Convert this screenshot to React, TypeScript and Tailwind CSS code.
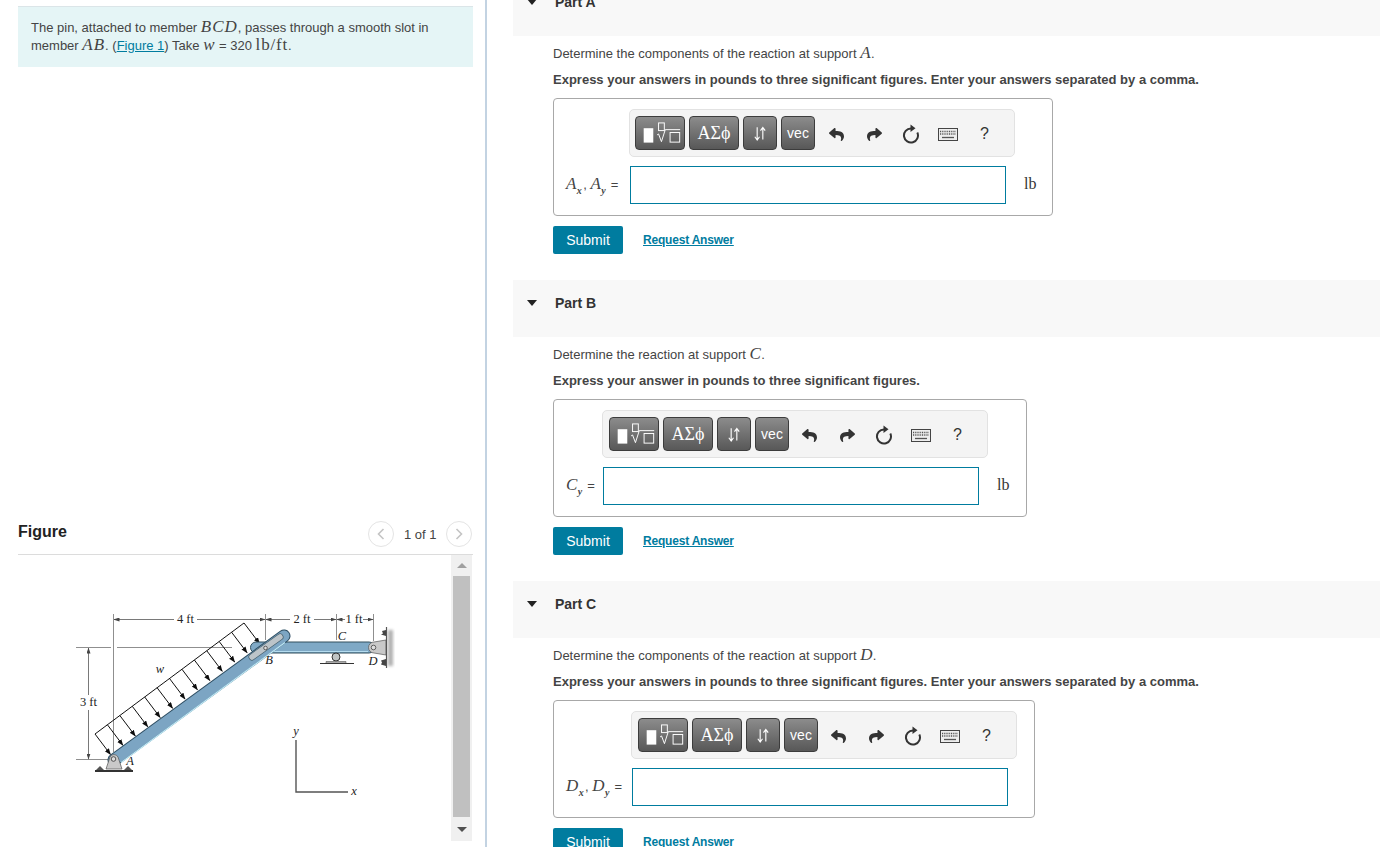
import { ReactNode } from 'react';
import { FaReply, FaShare } from 'react-icons/fa';

const Mi = ({ children, wide }: { children: ReactNode; wide?: boolean }) => (
  <span className={`[font-family:'Liberation_Serif',serif] italic text-[17px] ${wide ? 'tracking-[1px]' : 'tracking-[0.4px]'}`}>{children}</span>
);

const Sub = ({ children }: { children: ReactNode }) => (
  <sub className="text-[10px] font-bold align-[-2px] leading-none mr-[1px]">{children}</sub>
);

function TemplateIcon() {
  return (
    <svg width="50" height="34" viewBox="0 0 50 34" fill="none" stroke="#fff" strokeWidth="1">
      <rect x="8" y="12" width="10" height="15" fill="#fff" stroke="none" />
      <rect x="23.500" y="6.500" width="6" height="8" />
      <path d="M22 19l1.500-1 3 8 4-12.500h15.500" />
      <rect x="35.500" y="16.500" width="10" height="10" />
    </svg>
  );
}

function ArrowsIcon() {
  return (
    <svg width="34" height="34" viewBox="0 0 34 34" fill="none" stroke="#fff" strokeWidth="1.200">
      <path d="M14 11v13M11.500 21l2.500 3.500 2.500-3.500M20 24V11M17.500 14.500l2.500-3.500 2.500 3.500" />
    </svg>
  );
}

function ResetIcon() {
  return (
    <svg width="18" height="20" viewBox="0 0 18 20" fill="none">
      <path d="M9 4.500a7 7 0 1 0 6.300 4" stroke="#333" strokeWidth="2" />
      <path d="M8.500 0.500l5 3.800-5 3.700z" fill="#333" />
    </svg>
  );
}

function KeyboardIcon() {
  return (
    <svg width="20" height="13" viewBox="0 0 20 13" fill="none">
      <rect x="0.500" y="0.500" width="19" height="12" fill="#eee" stroke="#444" />
      <path d="M2 3.500h16M2 6h16" stroke="#555" strokeWidth="1.300" strokeDasharray="1 0.800" />
      <path d="M4 9.500h12" stroke="#555" strokeWidth="1.300" />
    </svg>
  );
}

function ToolButton({ className, children }: { className: string; children: ReactNode }) {
  return (
    <div className={`h-[34px] flex items-center justify-center rounded-[4px] border border-[#3c3c3c] bg-gradient-to-b from-[#8c8c8c] to-[#585858] text-white ${className}`}>
      {children}
    </div>
  );
}

function Toolbar({ nudge }: { nudge?: boolean }) {
  return (
    <div className="w-[386px] h-[48px] flex items-center pl-[5px] rounded-[5px] border border-[#e2e2e2] bg-[#f4f4f4]">
      <div className={nudge ? 'flex gap-[4px] ml-px -mr-px' : 'flex gap-[4px]'}>
        <ToolButton className="w-[50px]"><TemplateIcon /></ToolButton>
        <ToolButton className="w-[50px] [font-family:'Liberation_Serif',serif] text-[18px]">ΑΣϕ</ToolButton>
        <ToolButton className="w-[34px]"><ArrowsIcon /></ToolButton>
        <ToolButton className="w-[34px] text-[14px]">vec</ToolButton>
      </div>
      <div className="flex items-center text-[#333] ml-[3px] mt-[2px]">
        <div className="w-[37px] flex justify-center"><FaReply size={15} /></div>
        <div className="w-[38px] flex justify-center"><FaShare size={15} /></div>
        <div className="w-[36px] flex justify-center"><ResetIcon /></div>
        <div className="w-[37px] flex justify-center"><KeyboardIcon /></div>
        <div className="w-[37px] flex justify-center text-[16px]">?</div>
      </div>
    </div>
  );
}

type PartProps = {
  name: string;
  question: ReactNode;
  instruction: string;
  label: ReactNode;
  labelWidth: string;
  boxWidth: string;
  unit?: string;
  nudge?: boolean;
};

function Part({ name, question, instruction, label, labelWidth, boxWidth, unit, nudge }: PartProps) {
  return (
    <section className="pb-[26px]">
      <div className="h-[57px] bg-[#f8f8f8] flex items-center pl-[14px] pb-[11px]">
        <div className="w-0 h-0 border-l-[5.5px] border-r-[5.5px] border-t-[6px] border-l-transparent border-r-transparent border-t-[#222]" />
        <h3 className="ml-[18px] font-bold text-[14px] text-[#333]">{name}</h3>
      </div>
      <div className="pl-[40px]">
        <p className="mt-[7px] h-5 leading-5 text-[13px] text-[#444] whitespace-nowrap">{question}</p>
        <p className="mt-[7px] h-5 leading-5 text-[13px] font-bold text-[#444] whitespace-nowrap">{instruction}</p>
        <div className={`mt-[8px] h-[118px] rounded-[4px] border border-[#a8a8a8] pt-[10px] ${boxWidth}`}>
          <div className={`flex ${labelWidth}`}>
            <div className="shrink-0 w-full" />
            <div className="shrink-0 -ml-px"><Toolbar nudge={nudge} /></div>
          </div>
          <div className="flex items-center mt-[9px]">
            <div className={`shrink-0 pl-[12px] pb-[2px] text-[#444] text-[13px] whitespace-nowrap ${labelWidth}`}>{label}</div>
            <div className="shrink-0 w-[376px] h-[38px] border border-[#007c9f] bg-white" />
            {unit && <span className="ml-[18px] pb-[2px] [font-family:'Liberation_Serif',serif] text-[16px] text-[#333]">{unit}</span>}
          </div>
        </div>
        <div className="mt-[10px] flex items-center">
          <button className="w-[70px] h-[28px] rounded-[2px] bg-[#007c9f] text-white text-[14px]">Submit</button>
          <a className="ml-[20px] text-[12px] font-bold tracking-[-0.2px] text-[#007c9f] underline">Request Answer</a>
        </div>
      </div>
    </section>
  );
}

function Diagram() {
  const arrows = Array.from({ length: 13 }, (_, i) => ({
    x: 95 + 12.42 * i,
    y: 734 - 9.25 * i,
  }));
  return (
    <svg width="433" height="292" viewBox="18 555 433 292" className="block" fill="none">
      <defs>
        <marker id="head" markerWidth="7" markerHeight="6" refX="6" refY="2.500" orient="auto" markerUnits="userSpaceOnUse">
          <path d="M0 0l6.500 2.500L0 5z" fill="#111" />
        </marker>
        <marker id="dim" markerWidth="6" markerHeight="4" refX="5.500" refY="2" orient="auto" markerUnits="userSpaceOnUse">
          <path d="M0 0l6 2-6 2z" fill="#444" />
        </marker>
        <marker id="dimStart" markerWidth="6" markerHeight="4" refX="0.500" refY="2" orient="auto" markerUnits="userSpaceOnUse">
          <path d="M6 0L0 2l6 2z" fill="#444" />
        </marker>
        <filter id="soft"><feGaussianBlur stdDeviation="0.400" /></filter>
        <filter id="shadow" x="-30%" y="-300%" width="160%" height="700%"><feGaussianBlur stdDeviation="1.500" /></filter>
      </defs>

      <g filter="url(#soft)">
        {/* dimension and reference lines */}
        <g stroke="#8f8f8f" strokeWidth="1">
          <path d="M113.500 614V752M265.500 614V640M336.500 614V640M373.500 614V641" />
          <path d="M76 647.500H111M117 647.500H232M76 759.500H108" />
        </g>
        <g stroke="#555" strokeWidth="0.800">
          <path d="M114 619.500H174" markerStart="url(#dimStart)" />
          <path d="M197 619.500H265" markerEnd="url(#dim)" />
          <path d="M266 619.500H290" markerStart="url(#dimStart)" />
          <path d="M314 619.500H336" markerEnd="url(#dim)" />
          <path d="M337 619.500H345" markerStart="url(#dimStart)" />
          <path d="M363 619.500H373" markerEnd="url(#dim)" />
          <path d="M88.500 648V695" markerStart="url(#dimStart)" />
          <path d="M88.500 710V759" markerEnd="url(#dim)" />
        </g>

        {/* distributed load */}
        <path d="M95 734L244 623" stroke="#111" strokeWidth="1" />
        {arrows.map((a, i) => (
          <path key={i} d={`M${a.x} ${a.y}l15.500 20.500`} stroke="#111" strokeWidth="1" markerEnd="url(#head)" />
        ))}

        {/* member BCD */}
        <rect x="250.500" y="642" width="124" height="11" rx="5.500" fill="#7fa9c6" stroke="#33505f" strokeWidth="1" />
        <path d="M262 651.500H368" stroke="#b5dcef" strokeWidth="1" />

        {/* support D */}
        <path d="M388 630h5v36h-5z" fill="#b0b0b0" filter="url(#shadow)" />
        <path d="M386 640L374 642a5.500 5.500 0 0 0 0 11L386 655z" fill="#c9c9c9" stroke="#555" strokeWidth="0.700" />
        <circle cx="373.500" cy="647.500" r="2.300" fill="#ddd" stroke="#444" strokeWidth="0.800" />
        <path d="M386.500 627V668" stroke="#555" strokeWidth="1.200" />
        <path d="M386 636l-5-1.500 2-1-1-2.500 4-1zM386 666l-5-1.500 1-2-1-2 5-1.500z" fill="#444" />

        {/* member AB */}
        <path d="M114 760L284 636" stroke="#2f4e62" strokeWidth="13" strokeLinecap="round" />
        <path d="M114 760L284 636" stroke="#7ba5c3" strokeWidth="11" strokeLinecap="round" />
        <path d="M121 762.500L285 642.500" stroke="#c2ecf9" strokeWidth="1.200" />
        <path d="M252 657L280 637" stroke="#47616f" strokeWidth="7" strokeLinecap="round" />
        <path d="M252 657L280 637" stroke="#bcc4c9" strokeWidth="5.500" strokeLinecap="round" />
        <circle cx="265.500" cy="648" r="1.800" fill="#ddd" stroke="#444" strokeWidth="0.800" />

        {/* roller C */}
        <path d="M322 667h32" stroke="#aaa" strokeWidth="3" filter="url(#shadow)" />
        <circle cx="336" cy="657" r="4" fill="#bfc4c4" stroke="#333" strokeWidth="1" />
        <path d="M326 661.500H346V663.500H326z" fill="#aaa" stroke="#444" strokeWidth="0.500" />
        <path d="M320 663.500H354" stroke="#333" strokeWidth="1" />

        {/* support A */}
        <path d="M97 775h36" stroke="#999" strokeWidth="4" filter="url(#shadow)" />
        <path d="M106 769L110 757a4.500 4.500 0 0 1 8 0L122 769z" fill="#c9c9c9" stroke="#555" strokeWidth="0.700" />
        <circle cx="113.500" cy="759" r="2.300" fill="#ddd" stroke="#333" strokeWidth="0.800" />
        <path d="M96 770l4-4 4 4zM124 770l4-4 4 4z" fill="#555" />
        <path d="M95 771H133" stroke="#333" strokeWidth="2" />

        {/* axes */}
        <path d="M296 740V792H348" stroke="#555" strokeWidth="1.400" />
      </g>

      <g fontFamily="'Liberation Serif', serif" fontSize="12.500" fill="#222">
        <text x="185.500" y="623" textAnchor="middle">4 ft</text>
        <text x="302" y="623" textAnchor="middle">2 ft</text>
        <text x="354" y="623" textAnchor="middle">1 ft</text>
        <text x="88.500" y="706" textAnchor="middle">3 ft</text>
        <g fontStyle="italic">
          <text x="160" y="673" textAnchor="middle">w</text>
          <text x="269" y="664" textAnchor="middle">B</text>
          <text x="342" y="640" textAnchor="middle">C</text>
          <text x="373" y="665" textAnchor="middle">D</text>
          <text x="130" y="765" textAnchor="middle">A</text>
          <text x="296" y="735" textAnchor="middle">y</text>
          <text x="354" y="795" textAnchor="middle">x</text>
        </g>
      </g>
    </svg>
  );
}

function PagerButton({ dir }: { dir: 'left' | 'right' }) {
  return (
    <div className="w-[26px] h-[26px] rounded-full border border-[#e4e4e4] flex items-center justify-center">
      <svg width="10" height="14" viewBox="0 0 10 14" fill="none" stroke="#c4c4c4" strokeWidth="1.600">
        <path d={dir === 'left' ? 'M7.500 2L2.500 7l5 5' : 'M2.500 2l5 5-5 5'} />
      </svg>
    </div>
  );
}

function ScrollBar() {
  return (
    <div className="w-[21px] h-[286px] bg-[#f0f0f0] px-[2px] flex flex-col items-center">
      <div className="h-[21px] flex items-center justify-center">
        <div className="w-0 h-0 border-l-[5px] border-r-[5px] border-b-[5px] border-l-transparent border-r-transparent border-b-[#a0a0a0]" />
      </div>
      <div className="w-[17px] h-[241px] bg-[#c0c0c0]" />
      <div className="h-[24px] flex items-center justify-center">
        <div className="w-0 h-0 border-l-[5px] border-r-[5px] border-t-[5px] border-l-transparent border-r-transparent border-t-[#505050]" />
      </div>
    </div>
  );
}

export default function App() {
  return (
    <div className="flex w-[1380px] h-[847px] overflow-hidden bg-white [font-family:'Liberation_Sans',Arial,sans-serif]">
      <aside className="w-[487px] shrink-0 border-r-2 border-[#c3d3e2] pl-[18px] pr-[12px] pt-[6px]">
        <div className="h-[61px] border-t border-[#dbe5e8] bg-[#e5f5f6] pl-[13px] pt-[11px] text-[13px] leading-[17px] text-[#444] whitespace-nowrap">
          <p>
            The pin, attached to member <Mi wide>BCD</Mi>, passes through a smooth slot in
            <br />
            member <Mi wide>AB</Mi>. (<a className="text-[#007c9f] underline">Figure 1</a>) Take <Mi wide>w</Mi> = 320{' '}
            <span className="[font-family:'Liberation_Serif',serif] text-[17px] tracking-[0.8px]">lb/ft</span>.
          </p>
        </div>
        <div className="mt-[450px] h-[38px] flex items-center justify-between border-b border-[#dcdcdc] pb-[8px] pr-px">
          <h2 className="font-bold text-[16px] text-[#222]">Figure</h2>
          <div className="flex items-center mt-[4px] text-[13px] text-[#444]">
            <PagerButton dir="left" />
            <span className="mx-[10px] w-[32px] text-center whitespace-nowrap mt-[2px]">1 of 1</span>
            <PagerButton dir="right" />
          </div>
        </div>
        <div className="flex">
          <Diagram />
          <ScrollBar />
        </div>
      </aside>

      <main className="flex-1 ml-[26px] -mt-[21px]">
        <Part
          name="Part A"
          question={<>Determine the components of the reaction at support <Mi>A</Mi>.</>}
          instruction="Express your answers in pounds to three significant figures. Enter your answers separated by a comma."
          label={<><Mi>A<Sub>x</Sub></Mi>, <Mi>A<Sub>y</Sub></Mi> =</>}
          labelWidth="w-[76px]"
          boxWidth="w-[500px]"
          unit="lb"
        />
        <Part
          name="Part B"
          question={<>Determine the reaction at support <Mi>C</Mi>.</>}
          instruction="Express your answer in pounds to three significant figures."
          label={<><Mi>C<Sub>y</Sub></Mi> =</>}
          labelWidth="w-[49px]"
          boxWidth="w-[474px]"
          unit="lb"
          nudge
        />
        <Part
          name="Part C"
          question={<>Determine the components of the reaction at support <Mi>D</Mi>.</>}
          instruction="Express your answers in pounds to three significant figures. Enter your answers separated by a comma."
          label={<><Mi>D<Sub>x</Sub></Mi>, <Mi>D<Sub>y</Sub></Mi> =</>}
          labelWidth="w-[78px]"
          boxWidth="w-[482px]"
          nudge
        />
      </main>
    </div>
  );
}
